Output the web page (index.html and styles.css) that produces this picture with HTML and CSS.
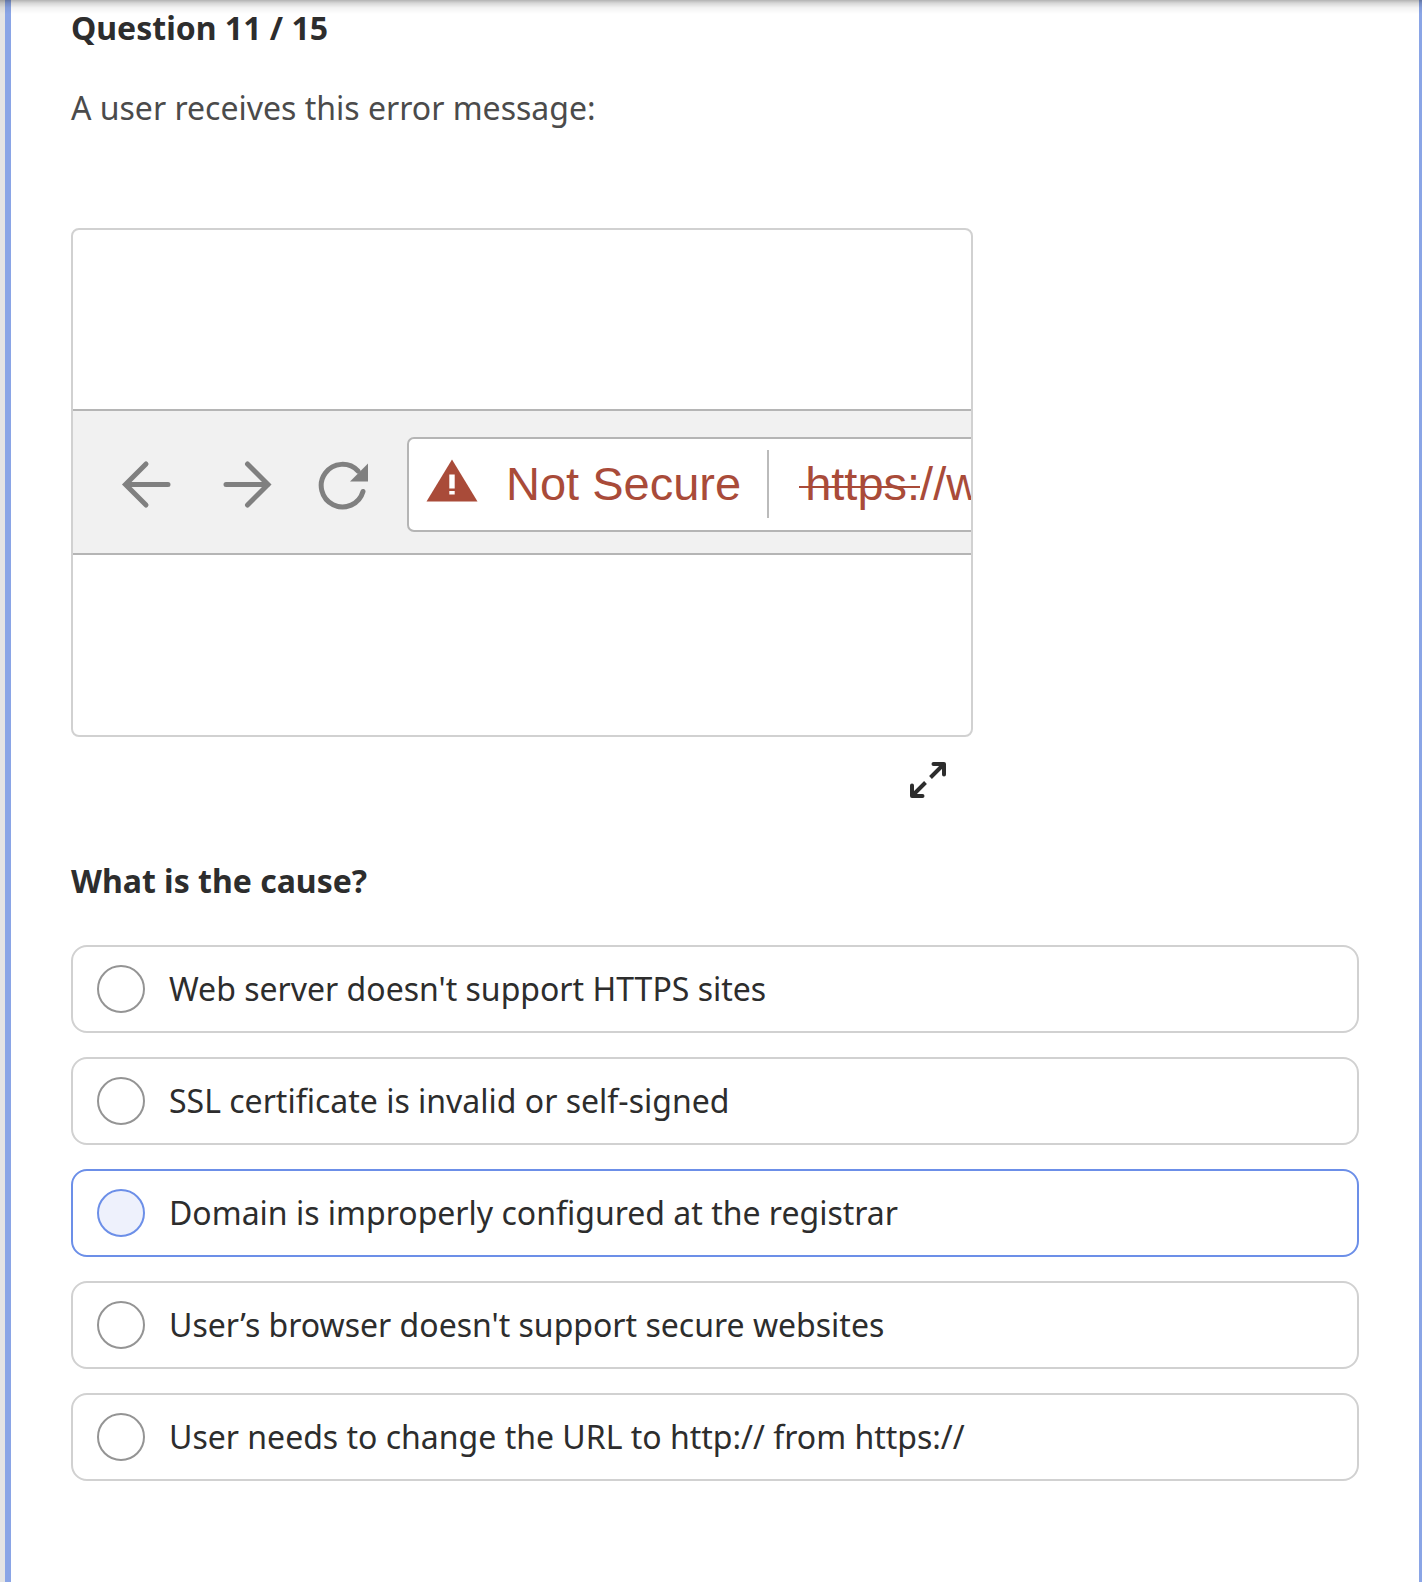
FILE: index.html
```html
<!DOCTYPE html>
<html lang="en">
<head>
    <meta charset="UTF-8">
    <meta name="viewport" content="width=device-width, initial-scale=1.0">
    <title>Question 11 / 15</title>
    <link rel="stylesheet" href="styles.css">
</head>
<body>
    <div class="top-shadow"></div>
    <main class="quiz">
        <h1 class="title">Question 11 / 15</h1>
        <p class="intro">A user receives this error message:</p>

        <div class="figure">
            <div class="toolbar">
                <svg class="nav-icons" width="334" height="141" viewBox="1 0 334 141" fill="none" stroke="#808080" stroke-width="5" stroke-linecap="round">
                    <path d="M96 72.500H54M74 52L53.500 72.500L74 93" />
                    <path d="M154 72.500H196M175.500 52L196 72.500L175.500 93" />
                    <path d="M291 79.500A21.300 21.300 0 1 1 286 59" />
                    <path d="M296 51.500V69.500H278Z" fill="#808080" stroke="none" />
                </svg>
                <div class="address">
                    <svg class="warning" width="52" height="43" viewBox="0 0 52 43">
                        <path d="M26 0.500L51.500 42.500H0.500Z" fill="#a94b39" />
                        <rect x="23.300" y="15.500" width="5.400" height="14" fill="#fff" />
                        <rect x="23.300" y="32" width="5.400" height="3.500" fill="#fff" />
                    </svg>
                    <span class="status">Not Secure</span>
                    <span class="divider"></span>
                    <span class="url"><span class="scheme">https:</span>//w</span>
                </div>
            </div>
        </div>
        <div class="figure-actions">
            <svg width="36" height="36" viewBox="0 0 36 36" fill="none" stroke="#2d2d2d" stroke-width="4" stroke-linejoin="round">
                <path d="M23.500 2H34V12.500M2 23.500V34H12.500" stroke-linecap="round" />
                <path d="M33 3L20.500 15.500M3 33L15.500 20.500" />
            </svg>
        </div>

        <h2 class="ask">What is the cause?</h2>
        <div class="options">
            <div class="option"><span class="radio"></span>Web server doesn't support HTTPS sites</div>
            <div class="option"><span class="radio"></span>SSL certificate is invalid or self-signed</div>
            <div class="option active"><span class="radio"></span>Domain is improperly configured at the registrar</div>
            <div class="option"><span class="radio"></span>User’s browser doesn't support secure websites</div>
            <div class="option"><span class="radio"></span>User needs to change the URL to http:// from https://</div>
        </div>
    </main>
</body>
</html>
```

FILE: styles.css
```css
* {
    box-sizing: border-box;
}
body {
    margin: 0;
    padding-left: 5px;
    background: #e4e4e4;
    font-family: "Noto Sans", sans-serif;
    font-size: 32px;
    line-height: 48px;
    color: #2d2d2d;
}
.top-shadow {
    position: absolute;
    top: 0;
    left: 0;
    width: 100%;
    height: 14px;
    background: linear-gradient(rgba(0, 0, 0, 0.3), rgba(0, 0, 0, 0.16) 22%, rgba(0, 0, 0, 0.05) 55%, rgba(0, 0, 0, 0));
}
.quiz {
    height: 1582px;
    padding: 4px 60px 0;
    background: #fff;
    border-left: 6px solid #8aa5e6;
    border-right: 3px solid #8aa5e6;
}
.title,
.ask {
    margin: 0;
    font-size: 32px;
    font-weight: 700;
}
.intro {
    margin: 32px 0 96px;
    color: #4b4b4b;
}
.figure {
    display: flex;
    flex-direction: column;
    justify-content: center;
    width: 902px;
    height: 509px;
    border: 2px solid #d1d1d1;
    border-radius: 8px;
    overflow: hidden;
}
.toolbar {
    display: flex;
    align-items: center;
    height: 146px;
    margin-bottom: 1px;
    background: #f1f1f1;
    border-top: 2px solid #b5b5b5;
    border-bottom: 2px solid #b5b5b5;
}
.nav-icons {
    flex: none;
}
.address {
    display: flex;
    flex: none;
    align-items: center;
    width: 620px;
    height: 95px;
    margin-top: 4px;
    padding-left: 16.5px;
    background: #fff;
    border: 2px solid #b5b5b5;
    border-radius: 7px;
    font-family: "Liberation Sans", sans-serif;
    font-size: 47px;
    color: #a94b39;
    white-space: nowrap;
}
.warning {
    flex: none;
    margin-top: -8px;
}
.status {
    margin: 0 26px 0 28.5px;
}
.divider {
    flex: none;
    width: 2px;
    height: 68px;
    background: #bbb;
}
.url {
    margin-left: 30px;
}
.scheme {
    display: inline-block;
    padding-left: 6px;
    background: linear-gradient(#a94b39, #a94b39) 0 26px / 100% 2px no-repeat;
}
.figure-actions {
    display: flex;
    justify-content: flex-end;
    width: 902px;
    height: 120px;
    padding: 25px 27px 0 0;
}
.ask {
    margin-bottom: 40px;
}
.options {
    display: flex;
    flex-direction: column;
    gap: 24px;
}
.option {
    display: flex;
    align-items: center;
    gap: 24px;
    height: 88px;
    padding: 0 24px;
    border: 2px solid #d1d1d1;
    border-radius: 16px;
}
.radio {
    width: 48px;
    height: 48px;
    border: 2px solid #949494;
    border-radius: 50%;
}
.option.active {
    border-color: #6c8fe8;
}
.active .radio {
    border-color: #6c8fe8;
    background: #eef1fc;
}
```
